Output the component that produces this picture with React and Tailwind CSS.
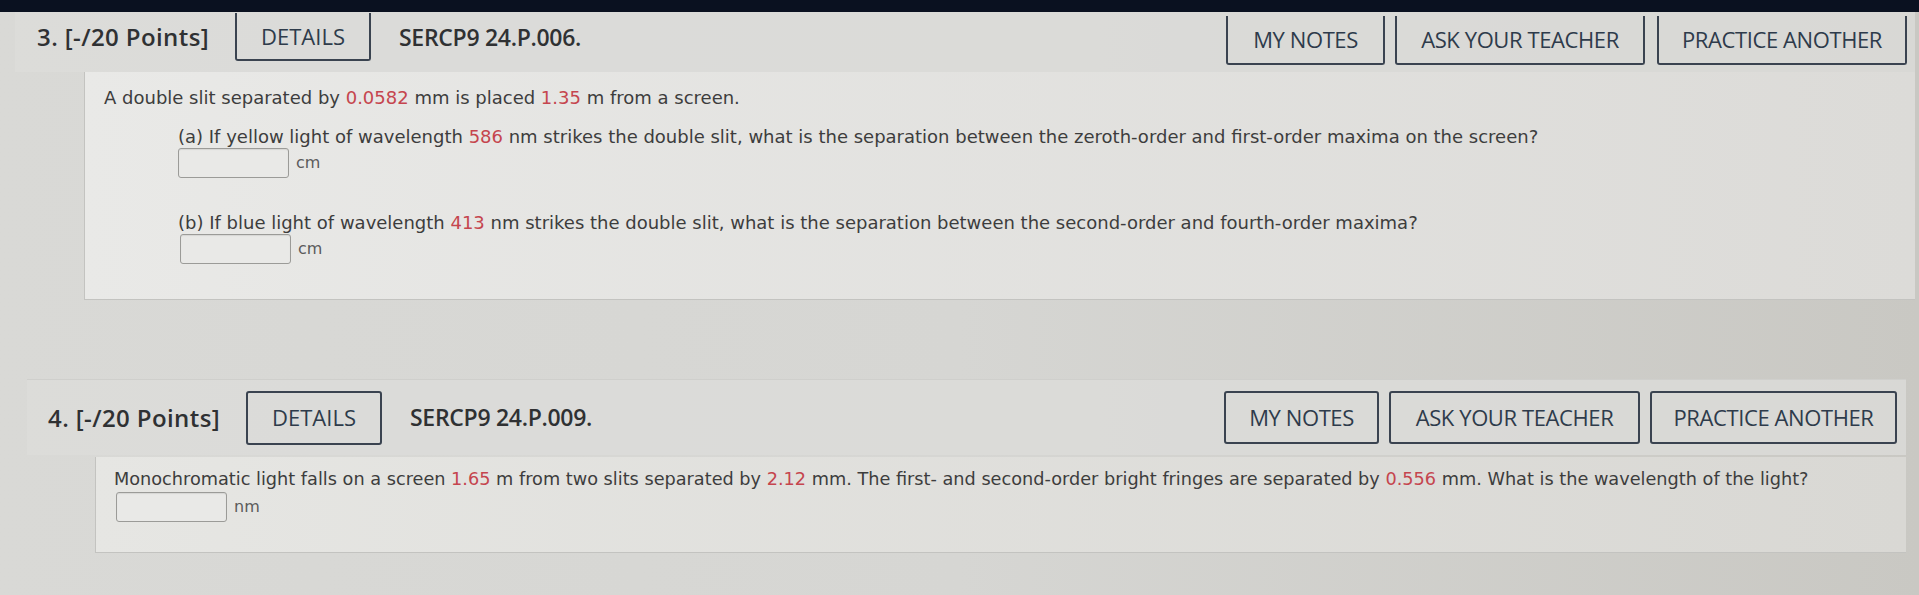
import React from 'react';

const headFont = { fontFamily: '"Open Sans", "Liberation Sans", sans-serif' };
const bodyFont = { fontFamily: '"DejaVu Sans", Verdana, sans-serif' };

function Red({ children }) {
  return <span className="text-[#c5454e]">{children}</span>;
}

function Btn({ children, className = '' }) {
  return (
    <div
      className={`flex items-center justify-center border-2 border-[#3a4350] rounded-[3px] text-[#2e3b4b] text-[22px] tracking-[-0.4px] ${className}`}
    >
      {children}
    </div>
  );
}

function Answer({ unit }) {
  return (
    <div className="flex items-center gap-[7px]">
      <div className="w-[111px] h-[30px] border border-[#9b9b98] rounded-[3px] bg-[#e9e9e7] shadow-[inset_0_1px_1px_rgba(0,0,0,0.08)]" />
      <span className="text-[16px] text-[#5b5b5b]" style={bodyFont}>
        {unit}
      </span>
    </div>
  );
}

function Header({ num, code, clipTop }) {
  return (
    <div className="flex items-center" style={headFont}>
      <div className="text-[24px] font-semibold text-[#2f3133] whitespace-nowrap tracking-[0.4px]">
        {num}. [-/20 Points]
      </div>
      <Btn
        className={`ml-[26px] w-[136px] tracking-[0px] ${clipTop ? 'h-[48px] border-t-0 rounded-t-none self-start' : 'h-[54px]'}`}
      >
        DETAILS
      </Btn>
      <div className="ml-[28px] text-[23px] font-semibold text-[#2f3133] whitespace-nowrap tracking-[-0.3px]">
        SERCP9 24.P.{code}.
      </div>
    </div>
  );
}

export default function App() {
  return (
    <div className="w-[1919px] h-[595px] overflow-hidden bg-linear-to-r from-[#d9d9d6] via-[#d6d6d3] to-[#c9c8c3] relative">
      {/* dark browser edge */}
      <div className="h-[12px] bg-[#0a1120]" />

      {/* question 3 */}
      <div className="ml-[15px] mr-[4px] h-[60px] bg-[#dcdcd9]/80 flex items-start justify-between pl-[22px] pr-[8px]">
        <div className="h-[50px] flex items-center">
          <Header num="3" code="006" clipTop />
        </div>
        <div className="flex gap-[10px] pt-[4px]" style={headFont}>
          <Btn className="w-[159px] h-[49px] border-t-0 rounded-t-none">MY NOTES</Btn>
          <Btn className="w-[250px] h-[49px] border-t-0 rounded-t-none">ASK YOUR TEACHER</Btn>
          <Btn className="ml-[2px] w-[250px] h-[49px] border-t-0 rounded-t-none">PRACTICE ANOTHER</Btn>
        </div>
      </div>
      <div
        className="ml-[84px] mr-[4px] h-[228px] bg-linear-to-r from-[#e9e9e7] to-[#dcdbd8] border-l border-b border-[#c3c3c0] pl-[19px] pt-[15px] text-[18px] text-[#3d3d3d]"
        style={bodyFont}
      >
        <p className="leading-[22px]">
          A double slit separated by <Red>0.0582</Red> mm is placed <Red>1.35</Red> m from a screen.
        </p>
        <div className="ml-[74px] mt-[17px]">
          <p className="leading-[22px]">
            (a) If yellow light of wavelength <Red>586</Red> nm strikes the double slit, what is the separation between the
            zeroth-order and first-order maxima on the screen?
          </p>
          <div>
            <Answer unit="cm" />
          </div>
          <p className="leading-[22px] mt-[34px]">
            (b) If blue light of wavelength <Red>413</Red> nm strikes the double slit, what is the separation between the
            second-order and fourth-order maxima?
          </p>
          <div className="ml-[2px]">
            <Answer unit="cm" />
          </div>
        </div>
      </div>

      {/* question 4 */}
      <div className="mt-[79px] ml-[27px] mr-[13px] h-[76px] bg-[#dcdcd9]/80 border-t border-[#cfcfcc] flex items-center justify-between pl-[21px] pr-[9px]">
        <div className="flex items-center">
          <Header num="4" code="009" />
        </div>
        <div className="flex gap-[10px]" style={headFont}>
          <Btn className="w-[155px] h-[53px]">MY NOTES</Btn>
          <Btn className="w-[251px] h-[53px]">ASK YOUR TEACHER</Btn>
          <Btn className="w-[247px] h-[53px]">PRACTICE ANOTHER</Btn>
        </div>
      </div>
      <div
        className="mt-[2px] ml-[95px] mr-[13px] h-[96px] bg-linear-to-r from-[#e6e6e3] to-[#d9d8d4] border-l border-b border-[#c3c3c0] pl-[18px] pt-[11px] text-[17.7px] text-[#3d3d3d]"
        style={bodyFont}
      >
        <p className="leading-[22px]">
          Monochromatic light falls on a screen <Red>1.65</Red> m from two slits separated by <Red>2.12</Red> mm. The
          first- and second-order bright fringes are separated by <Red>0.556</Red> mm. What is the wavelength of the light?
        </p>
        <div className="mt-[2px] ml-[2px]">
          <Answer unit="nm" />
        </div>
      </div>
    </div>
  );
}
